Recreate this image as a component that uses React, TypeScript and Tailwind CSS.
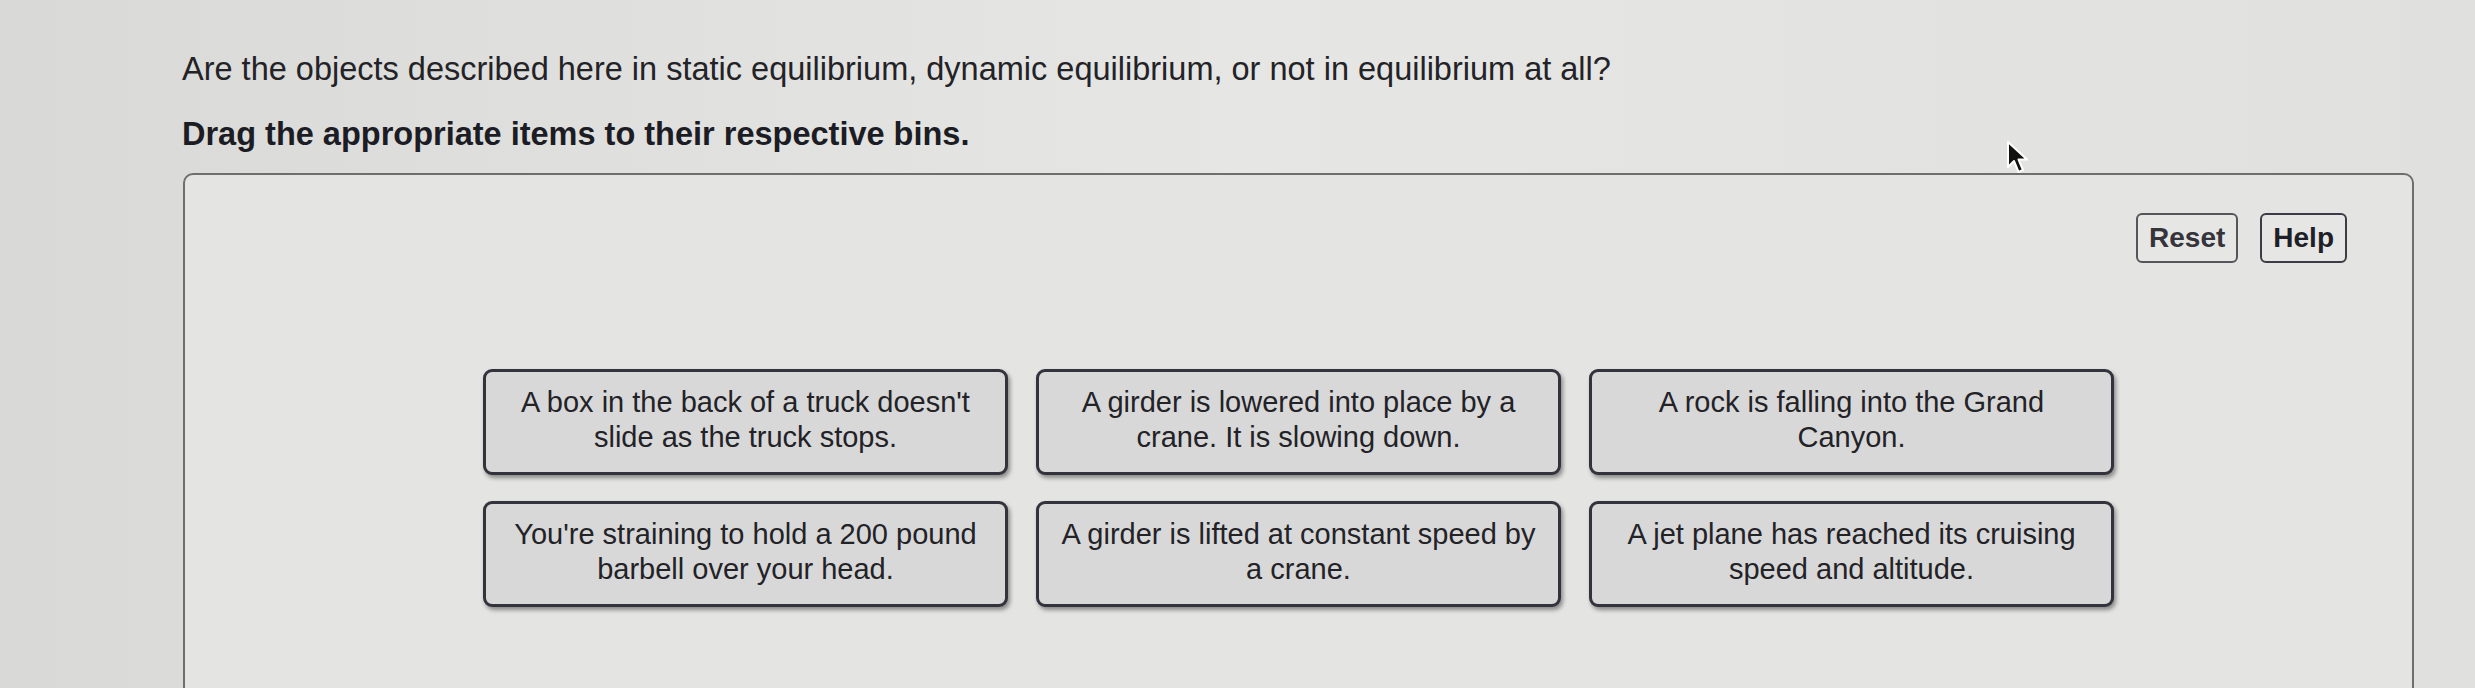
const items = [
  "A box in the back of a truck doesn't slide as the truck stops.",
  "A girder is lowered into place by a crane. It is slowing down.",
  "A rock is falling into the Grand Canyon.",
  "You're straining to hold a 200 pound barbell over your head.",
  "A girder is lifted at constant speed by a crane.",
  "A jet plane has reached its cruising speed and altitude.",
]

function Cursor() {
  return (
    <svg
      className="absolute left-[2006px] top-[140px]"
      width="24"
      height="36"
      viewBox="0 0 24 36"
    >
      <path
        d="M2 2 L2 27 L8 21 L12.5 32 L17 30 L12.5 19.5 L21 19.5 Z"
        fill="#111"
        stroke="#fff"
        strokeWidth="2"
        strokeLinejoin="round"
      />
    </svg>
  )
}

export default function App() {
  return (
    <div className="relative h-[688px] overflow-hidden bg-linear-to-r from-[#d9d9d7] via-[#e6e6e4] to-[#e0e0de] font-['Liberation_Sans',Arial,sans-serif]">
      <div className="pl-[182px] pt-[50px]">
        <p className="text-[32.5px] leading-[38px] text-[#232327]">
          Are the objects described here in static equilibrium, dynamic equilibrium, or not in equilibrium at all?
        </p>
        <p className="mt-[27px] text-[32.5px] leading-[38px] font-bold text-[#1c1c24]">
          Drag the appropriate items to their respective bins.
        </p>
      </div>

      <div className="ml-[183px] mr-[61px] mt-[20px] min-h-[600px] rounded-[10px] border-2 border-[#6e6e6e] bg-[#e4e4e2] pt-[38px]">
        <div className="flex justify-end gap-[22px] pr-[65px]">
          <button className="h-[50px] rounded-[6px] border-2 border-[#55555c] bg-[#e6e6e4] px-[11px] text-[28px] font-bold text-[#34343a]">
            Reset
          </button>
          <button className="h-[50px] rounded-[6px] border-2 border-[#3c3c46] bg-[#e6e6e4] px-[11px] text-[28px] font-bold text-[#1f1f28]">
            Help
          </button>
        </div>

        <div className="mx-auto mt-[106px] grid w-[1631px] grid-cols-3 gap-x-[28px] gap-y-[26px]">
          {items.map((text) => (
            <div
              key={text}
              className="flex h-[106px] items-center justify-center rounded-[9px] border-[3px] border-[#33333d] bg-[#d8d8d8] px-[20px] pb-[4px] text-center text-[29px] leading-[35px] text-[#222227] shadow-[2px_3px_4px_rgba(0,0,0,0.4)]"
            >
              {text}
            </div>
          ))}
        </div>
      </div>

      <Cursor />
    </div>
  )
}
